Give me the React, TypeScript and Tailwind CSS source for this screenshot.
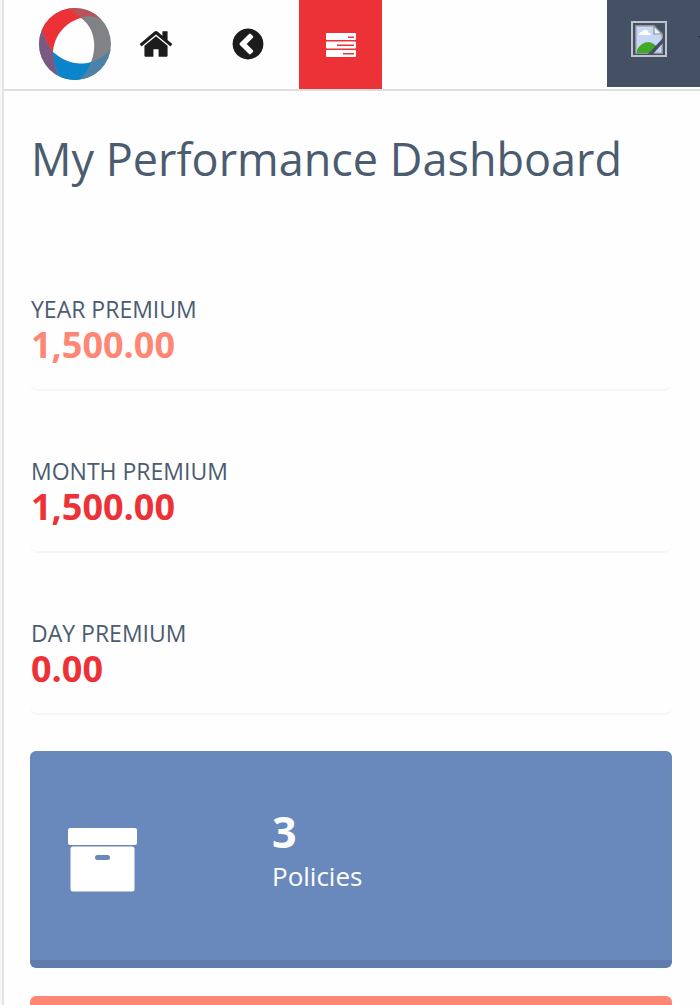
import React from 'react';

const PREMIUMS = [
  { label: 'YEAR PREMIUM', value: '1,500.00', color: 'text-[#fd8675]' },
  { label: 'MONTH PREMIUM', value: '1,500.00', color: 'text-[#ec3237]' },
  { label: 'DAY PREMIUM', value: '0.00', color: 'text-[#ec3237]' },
];

const Logo: React.FC = () => (
  <svg viewBox="0 0 72 72" className="size-[72px]" aria-hidden="true">
    <defs>
      <clipPath id="logo-disc">
        <circle cx="36" cy="36" r="36" />
      </clipPath>
    </defs>
    <g clipPath="url(#logo-disc)">
      <rect width="72" height="72" fill="#808285" />
      {/* red arc and its overlap with the grey one */}
      <path d="M0 0H72V14C58 8 48 7 42 10C28 16 17 28 14 44L3 22Z" fill="#b9525a" />
      <path d="M0 0H40L29 1C33 3 38 6 42 10C28 14 15 27 14 44C9 37 5 30 3 22Z" fill="#ed3237" />
      {/* purple overlap on the left */}
      <path d="M0 18L3 22C5 30 9 37 14 44C15 54 17 62 22 72H0Z" fill="#7a5a82" />
      {/* blue arc and its overlap with the grey one */}
      <path d="M14 44C26 55 39 57 52 54C61 51 68 46 73 40V72H20C17 63 15 54 14 44Z" fill="#4c82a8" />
      <path d="M14 44C26 55 39 57 52 54C49 62 45 67 40 72H22C17 63 15 54 14 44Z" fill="#0a84cb" />
      <path d="M14 44C15 27 27 14 42 10C56 20 58 39 52 54C38 58 26 54 14 44Z" fill="#fefefe" />
    </g>
  </svg>
);

const HomeIcon: React.FC = () => (
  <svg viewBox="0 0 1792 1792" className="size-9" fill="currentColor" aria-hidden="true">
    <path d="M1472 992v480q0 26-19 45t-45 19h-384v-384h-256v384h-384q-26 0-45-19t-19-45v-480q0-1 .5-3t.5-3l575-474 575 474q1 2 1 6zm223-69l-62 74q-8 9-21 11h-3q-13 0-21-7l-692-577-692 577q-12 8-24 7-13-2-21-11l-62-74q-8-10-7-23.5t11-21.5l719-599q32-26 76-26t76 26l244 204v-195q0-14 9-23t23-9h192q14 0 23 9t9 23v408l219 182q10 8 11 21.5t-7 23.5z" />
  </svg>
);

const BackIcon: React.FC = () => (
  <svg viewBox="0 0 1792 1792" className="size-9" fill="currentColor" aria-hidden="true">
    <path d="M1037 1395l102-102q19-19 19-45t-19-45l-307-307 307-307q19-19 19-45t-19-45l-102-102q-19-19-45-19t-45 19l-454 454q-19 19-19 45t19 45l454 454q19 19 45 19t45-19zm627-499q0 209-103 385.5t-279.5 279.5-385.5 103-385.5-103-279.5-279.5-103-385.5 103-385.5 279.5-279.5 385.5-103 385.5 103 279.5 279.5 103 385.5z" />
  </svg>
);

const TasksIcon: React.FC = () => (
  <svg viewBox="0 0 30 24" className="h-6 w-[30px]" aria-hidden="true">
    <g fill="#fff">
      <rect width="30" height="7" rx="1" />
      <rect y="8.5" width="30" height="7" rx="1" />
      <rect y="17" width="30" height="7" rx="1" />
    </g>
    <g fill="#ec3237">
      <rect x="22" y="3.5" width="6" height="1.5" />
      <rect x="11" y="11.5" width="17" height="1.5" />
      <rect x="17" y="20" width="11" height="1.5" />
    </g>
  </svg>
);

const ArchiveIcon: React.FC = () => (
  <svg viewBox="0 0 69 64" className="h-16 w-[69px]" aria-hidden="true">
    <rect width="69" height="17" rx="2" fill="#fff" />
    <rect x="2.5" y="18.5" width="64" height="45" rx="2.5" fill="#fff" />
    <rect x="27" y="27" width="15" height="5" rx="2.5" fill="#6989bd" />
  </svg>
);

const AvatarPlaceholder: React.FC = () => (
  <svg viewBox="0 0 36 36" className="size-9 shrink-0" aria-hidden="true">
    <rect x="1" y="1" width="34" height="34" fill="none" stroke="#c0c4ca" strokeWidth="2" />
    <path d="M5 5H23L31 13V32H5Z" fill="#c8d7f6" stroke="#a5a9ae" strokeWidth="1.5" />
    <path d="M8 14q0-3 3-3q1-3 4-2q2 0 3 3q2 0 2 2Z" fill="#fff" />
    <path d="M6 32V29Q10 21 18 21Q23 22 26 26L20 32Z" fill="#42aa28" />
    <path d="M23 5V13H31Z" fill="#f4f4f4" stroke="#8d9298" strokeWidth="1.2" />
    <path d="M17 33L32 17V22L22 33Z" fill="#445064" />
  </svg>
);

const App: React.FC = () => {
  return (
    <div className="h-screen overflow-hidden bg-[#f7f7f7] pl-0.5 font-['Open_Sans','Noto_Sans',sans-serif] text-[#4b5c70]">
      <div className="min-h-full border-l-2 border-[#e4e4e4] bg-[#fefefe]">
        <header className="flex h-[91px] items-start border-b-2 border-[#dfdfdf]">
          <a href="#" aria-label="Dashboard" className="ml-[35px] pt-2">
            <Logo />
          </a>
          <nav className="flex flex-1 text-[#1c1c1c]">
            <a href="#home" aria-label="Home" className="flex h-[88px] w-[90px] items-center justify-center">
              <HomeIcon />
            </a>
            <button aria-label="Back" className="flex h-[88px] w-[94px] items-center justify-center">
              <BackIcon />
            </button>
            <button aria-label="Menu" className="ml-1 flex h-[89px] w-[83px] items-center justify-center bg-[#ec3237]">
              <TasksIcon />
            </button>
          </nav>
          <button aria-label="Account" className="flex h-[87px] w-[93px] items-center overflow-hidden bg-[#445064] pb-2.5 pl-6">
            <AvatarPlaceholder />
            <span className="ml-[31px] shrink-0 border-x-[6px] border-t-[6px] border-x-transparent border-t-[#222c38]" />
          </button>
        </header>

        <main className="pr-7 pl-[26px]">
          <h1 className="pt-9 pl-px text-[45px] leading-[64px]">My Performance Dashboard</h1>

          <section className="mt-[65px] flex flex-col gap-[27px]">
            {PREMIUMS.map((p) => (
              <div key={p.label} className="rounded-b-lg border-b-2 border-[#f7f7f7] pt-[35px] pb-[26px] pl-px">
                <p className="text-[23px] leading-9">{p.label}</p>
                <p className={`text-[36px] leading-9 font-bold ${p.color}`}>{p.value}</p>
              </div>
            ))}
          </section>

          <section className="mt-9 flex flex-col gap-7">
            <div className="flex h-[217px] items-center rounded-md border-b-8 border-[#5f7cac] bg-[#6989bd] pl-[38px] text-white">
              <div className="w-[204px] pt-2">
                <ArchiveIcon />
              </div>
              <div className="pb-2">
                <p className="text-[43px] leading-[48px] font-bold">3</p>
                <p className="text-[26px] leading-10">Policies</p>
              </div>
            </div>
            <div className="h-[217px] rounded-md border-b-8 border-[#e47969] bg-[#fd8675]" />
          </section>
        </main>
      </div>
    </div>
  );
};

export default App;
